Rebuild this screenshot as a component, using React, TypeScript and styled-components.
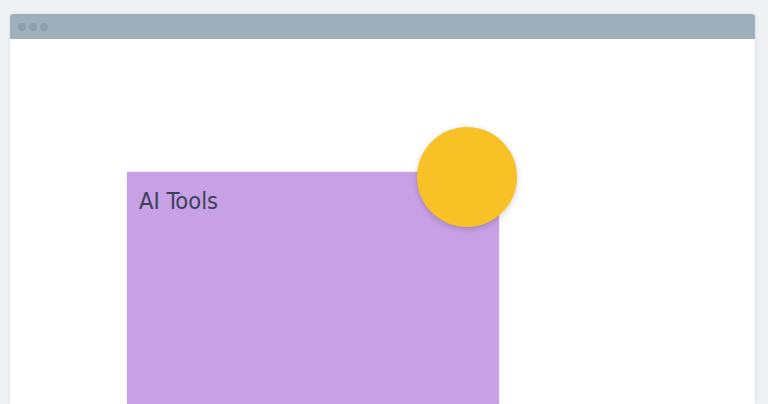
import React from 'react'
import styled, { createGlobalStyle } from 'styled-components'

const GlobalStyle = createGlobalStyle`
html, body {
  margin:0;
  padding:0;
  background-color:#eef2f5;
  overflow:hidden;
}
body {
  font-family:"Liberation Sans", Arial, sans-serif;
}
`

const Page = styled.div`
height:404px;
padding:14px 13px 0 10px;
box-sizing:border-box;
`

const BrowserWindow = styled.div`
display:flex;
flex-direction:column;
height:100%;
border-radius:3px 3px 0 0;
overflow:hidden;
background-color:#ffffff;
box-shadow:0 0 3px rgba(120,140,160,0.25);
`

const TitleBar = styled.div`
display:flex;
align-items:center;
gap:3px;
height:25px;
padding:0 0 0 8px;
background-color:#9fb0bd;
flex-shrink:0;
`

const Dot = styled.span`
width:8px;
height:8px;
border-radius:50%;
background-color:#8d9eac;
`

const Viewport = styled.div`
flex:1;
display:flex;
flex-direction:column;
padding:133px 0 0 117px;
`

const Card = styled.div`
position:relative;
flex:1;
width:372px;
padding:15px 12px;
box-sizing:border-box;
background-color:#c8a0e6;
box-shadow:0 0 3px rgba(0,0,0,0.12);
`

const Title = styled.h2`
margin:0;
font-family:"DejaVu Sans Condensed", "DejaVu Sans", sans-serif;
font-weight:400;
font-size:23.5px;
line-height:28px;
color:#3b4257;
`

const Badge = styled.div`
position:absolute;
top:-45px;
right:-18px;
width:100px;
height:100px;
border-radius:50%;
background-color:#f8c125;
box-shadow:0 2px 6px rgba(0,0,0,0.18);
`

const App = () => {
  return (
    <Page>
      <GlobalStyle />
      <BrowserWindow>
        <TitleBar>
          <Dot />
          <Dot />
          <Dot />
        </TitleBar>
        <Viewport>
          <Card>
            <Title>AI Tools</Title>
            <Badge />
          </Card>
        </Viewport>
      </BrowserWindow>
    </Page>
  )
}

export default App
